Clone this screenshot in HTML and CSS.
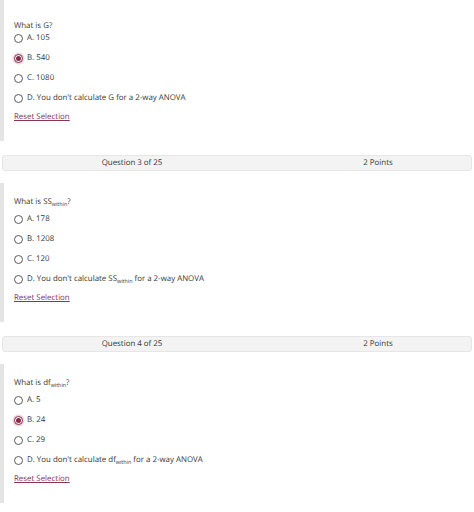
FILE: index.html
```html
<!DOCTYPE html>
<html>
<head>
<meta charset="utf-8">
<link rel="stylesheet" href="styles.css">
</head>
<body>
<div class="card first">
  <div class="q">What is G?</div>
  <div class="opts">
    <div class="opt"><span class="radio"></span><span>A. 105</span></div>
    <div class="opt"><span class="radio on"></span><span>B. 540</span></div>
    <div class="opt"><span class="radio"></span><span>C. 1080</span></div>
    <div class="opt"><span class="radio"></span><span>D. You don't calculate G for a 2-way ANOVA</span></div>
  </div>
  <a class="reset">Reset Selection</a>
</div>
<div class="hdr"><span class="num">Question 3 of 25</span><span class="pts">2 Points</span></div>
<div class="card">
  <div class="q">What is SS<sub>within</sub>?</div>
  <div class="opts">
    <div class="opt"><span class="radio"></span><span>A. 178</span></div>
    <div class="opt"><span class="radio"></span><span>B. 1208</span></div>
    <div class="opt"><span class="radio"></span><span>C. 120</span></div>
    <div class="opt"><span class="radio"></span><span>D. You don't calculate SS<sub>within</sub> for a 2-way ANOVA</span></div>
  </div>
  <a class="reset">Reset Selection</a>
</div>
<div class="hdr"><span class="num">Question 4 of 25</span><span class="pts">2 Points</span></div>
<div class="card">
  <div class="q">What is df<sub>within</sub>?</div>
  <div class="opts">
    <div class="opt"><span class="radio"></span><span>A. 5</span></div>
    <div class="opt"><span class="radio on"></span><span>B. 24</span></div>
    <div class="opt"><span class="radio"></span><span>C. 29</span></div>
    <div class="opt"><span class="radio"></span><span>D. You don't calculate df<sub>within</sub> for a 2-way ANOVA</span></div>
  </div>
  <a class="reset">Reset Selection</a>
</div>
</body>
</html>
```
FILE: styles.css
```css
html, body { margin: 0; padding: 0; background: #fff; }
body {
  font-family: "Open Sans", "Liberation Sans", sans-serif;
  font-size: 7.9px;
  color: #383838;
  text-rendering: geometricPrecision;
  overflow: hidden;
}
.card {
  border-left: 4px solid #e4e4e4;
  padding: 12px 0 17px 10px;
  display: flex;
  flex-direction: column;
  align-items: flex-start;
}
.card.first { padding-top: 19px; }
.q { line-height: 14px; }
.card.first .opts { margin-top: -5px; }
.opts { display: flex; flex-direction: column; }
.opt {
  height: 20px;
  display: flex;
  align-items: center;
  gap: 4px;
}
sub { font-size: 5.4px; vertical-align: -1.5px; line-height: 0; }
.radio {
  width: 7px; height: 7px;
  border: 1px solid #5a5a5a;
  border-radius: 50%;
  background: #fff;
  flex: none;
  display: flex; align-items: center; justify-content: center;
}
.radio.on {
  border-color: #8a2748;
  box-shadow: 0 0 0 1.5px #ecd6de;
}
.radio.on::after {
  content: "";
  width: 5px; height: 5px; border-radius: 50%;
  background: #8a2748;
}
.reset {
  margin-top: 2px;
  line-height: 14px;
  color: #8b3556;
  text-decoration: underline;
}
.hdr {
  margin: 14px 2px 12px 2px;
  height: 14px;
  border: 1px solid #e6e6e6;
  border-radius: 3px;
  background: #f3f3f3;
  display: grid;
  grid-template-columns: 258px 1fr;
  align-items: center;
  line-height: 14px;
}
.num { text-align: center; }
.pts { text-align: center; padding-left: 24px; }
```
